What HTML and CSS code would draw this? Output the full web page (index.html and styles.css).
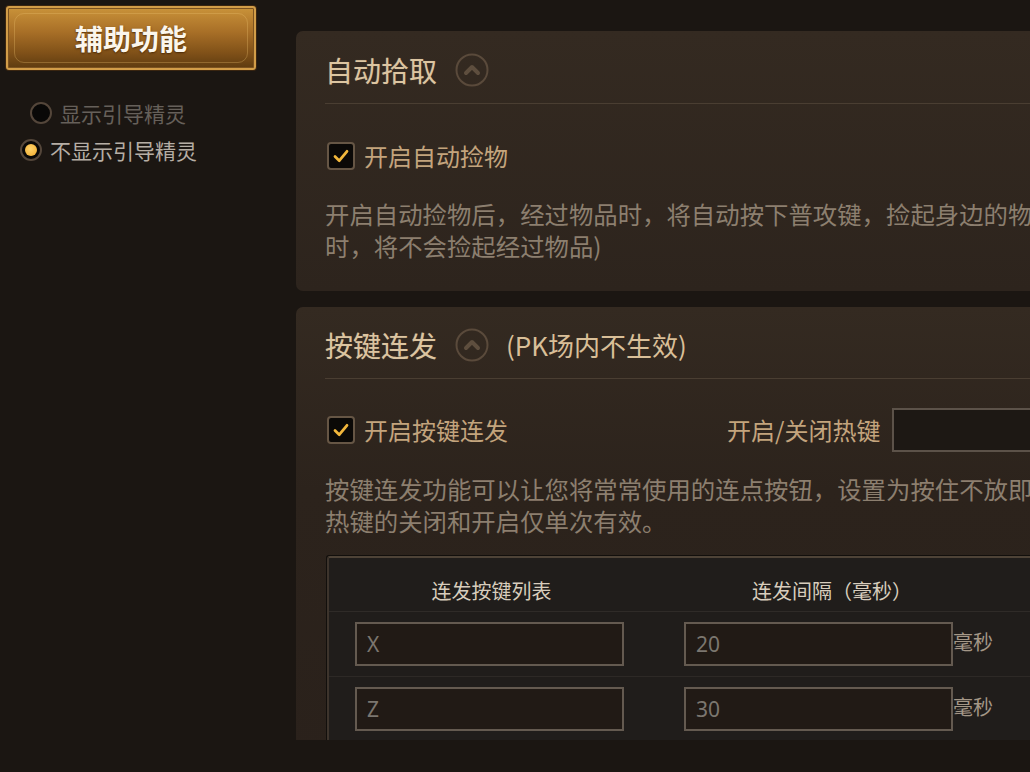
FILE: index.html
```html
<!DOCTYPE html>
<html lang="zh">
<head>
<meta charset="utf-8">
<title>辅助功能</title>
<link rel="stylesheet" href="styles.css">
</head>
<body>
<div class="app">
  <aside class="sidebar">
    <div class="tab-btn"><span class="tab-inner">辅助功能</span></div>
    <div class="radio-list">
      <div class="radio-row r1"><span class="radio"></span><span class="radio-text dim">显示引导精灵</span></div>
      <div class="radio-row r2"><span class="radio on"></span><span class="radio-text">不显示引导精灵</span></div>
    </div>
  </aside>
  <main class="main">
    <section class="panel p1">
      <header class="panel-head">
        <h2 class="panel-title">自动拾取</h2>
        <span class="collapse"><svg viewBox="0 0 34 34" width="34" height="34"><circle cx="17" cy="17" r="15.5" fill="none" stroke="#5a4a3b" stroke-width="2"/><path d="M11 20 L17 14 L23 20" fill="none" stroke="#5e4e3e" stroke-width="4" stroke-linecap="round" stroke-linejoin="round"/></svg></span>
      </header>
      <div class="check-row first">
        <span class="checkbox"><svg viewBox="0 0 28 28" width="28" height="28"><path d="M7 14.5 L12 19.5 L21 8.5" fill="none" stroke="#f2b73c" stroke-width="3.2" stroke-linecap="round" stroke-linejoin="round"/></svg></span>
        <span class="check-label">开启自动捡物</span>
      </div>
      <p class="desc d1"><span class="line">开启自动捡物后，经过物品时，将自动按下普攻键，捡起身边的物品（PK场内及骑乘状态</span><span class="line">时，将不会捡起经过物品)</span></p>
    </section>
    <section class="panel p2">
      <header class="panel-head h2">
        <h2 class="panel-title">按键连发</h2>
        <span class="collapse"><svg viewBox="0 0 34 34" width="34" height="34"><circle cx="17" cy="17" r="15.5" fill="none" stroke="#5a4a3b" stroke-width="2"/><path d="M11 20 L17 14 L23 20" fill="none" stroke="#5e4e3e" stroke-width="4" stroke-linecap="round" stroke-linejoin="round"/></svg></span>
        <span class="panel-note">(PK场内不生效)</span>
      </header>
      <div class="hot-row">
        <div class="check-row inline">
          <span class="checkbox"><svg viewBox="0 0 28 28" width="28" height="28"><path d="M7 14.5 L12 19.5 L21 8.5" fill="none" stroke="#f2b73c" stroke-width="3.2" stroke-linecap="round" stroke-linejoin="round"/></svg></span>
          <span class="check-label">开启按键连发</span>
        </div>
        <span class="hot-label">开启/关闭热键</span>
        <span class="hot-input"></span>
      </div>
      <p class="desc d2"><span class="line">按键连发功能可以让您将常常使用的连点按钮，设置为按住不放即可连续触发的按键，</span><span class="line">热键的关闭和开启仅单次有效。</span></p>
      <div class="table">
        <div class="t-head">
          <div class="th c1">连发按键列表</div>
          <div class="th c2">连发间隔（毫秒）</div>
        </div>
        <div class="t-row">
          <div class="td c1"><span class="field">X</span></div>
          <div class="td c2"><span class="field">20</span><span class="unit">毫秒</span></div>
        </div>
        <div class="t-row">
          <div class="td c1"><span class="field">Z</span></div>
          <div class="td c2"><span class="field">30</span><span class="unit">毫秒</span></div>
        </div>
      </div>
    </section>
  </main>
</div>
</body>
</html>
```

FILE: styles.css
```css
* { box-sizing: border-box; }
html, body { margin: 0; padding: 0; }
body {
  background: #1b1612;
  font-family: "Noto Sans CJK SC", "Noto Sans", sans-serif;
  width: 1030px;
  height: 772px;
  overflow: hidden;
}
.app {
  display: flex;
  height: 772px;
}
.sidebar {
  width: 296px;
  flex: none;
  padding: 6px 0 0 6px;
}
.tab-btn {
  width: 250px;
  height: 64px;
  border: 2px solid #d29d48;
  border-radius: 3px;
  background: linear-gradient(180deg, #c99239 0%, #a86f27 40%, #805118 75%, #5e3b10 100%);
  box-shadow: 0 0 0 1px #3a2510, inset 0 0 0 1px #7c5320;
  padding: 5px 6px;
}
.tab-inner {
  display: flex;
  align-items: center;
  justify-content: center;
  height: 100%;
  border: 1px solid rgba(240, 196, 112, 0.3);
  border-radius: 10px;
  color: #fbf6ec;
  font-size: 28px;
  font-weight: 700;
  line-height: 1;
  text-shadow: 0 1px 2px rgba(60, 30, 0, 0.8);
}
.radio-list {
  padding-top: 31px;
  display: flex;
  flex-direction: column;
  gap: 13px;
}
.radio-row {
  display: flex;
  align-items: center;
  height: 24px;
  gap: 8px;
}
.radio-row.r1 { padding-left: 24px; }
.radio-row.r2 { padding-left: 14px; }
.radio {
  width: 22px;
  height: 22px;
  border-radius: 50%;
  border: 2px solid #54463a;
  background: #090807;
  flex: none;
  display: flex;
  align-items: center;
  justify-content: center;
}
.radio.on::after {
  content: "";
  width: 12px;
  height: 12px;
  border-radius: 50%;
  background: radial-gradient(circle at 45% 40%, #ffd36a, #f0a92c);
}
.radio-text {
  font-size: 21px;
  line-height: 24px;
  color: #b6aea5;
}
.radio-text.dim { color: #66605a; }

.main {
  flex: none;
  width: 760px;
  height: 740px;
  overflow: hidden;
  padding-top: 31px;
  display: flex;
  flex-direction: column;
  gap: 16px;
}
.panel {
  width: 760px;
  border-radius: 7px 0 0 7px;
  background: linear-gradient(180deg, #342a21 0%, #2d241d 100%);
  padding: 0 0 0 29px;
  flex: none;
  overflow: hidden;
}
.p1 { height: 260px; }
.p2 { height: 460px; background: linear-gradient(180deg, #342a21 0%, #2c231c 40%, #2a211b 100%); }
.panel-head {
  display: flex;
  align-items: center;
  height: 73px;
  padding-top: 6px;
  border-bottom: 1px solid #4a3e32;
}
.panel-head.h2 { height: 72px; padding-top: 4px; }
.panel-title {
  margin: 0;
  font-size: 28px;
  font-weight: 400;
  line-height: 36px;
  color: #dcc5a1;
  text-shadow: 0 0 1px rgba(255, 220, 170, 0.3);
}
.collapse {
  display: flex;
  margin-left: 18px;
}
.panel-note {
  margin-left: 17px;
  font-size: 26px;
  line-height: 36px;
  color: #d9bf98;
}
.check-row {
  display: flex;
  align-items: center;
  gap: 9px;
  margin-left: 2px;
}
.check-row.first { margin-top: 38px; height: 28px; }
.check-row.inline { width: 400px; flex: none; }
.checkbox {
  width: 28px;
  height: 28px;
  flex: none;
  border: 2px solid #665645;
  border-radius: 4px;
  background: #0b0907;
  display: flex;
  align-items: center;
  justify-content: center;
}
.checkbox svg { width: 24px; height: 24px; }
.check-label {
  font-size: 24px;
  line-height: 28px;
  color: #c3a47d;
  white-space: nowrap;
}
.desc {
  margin: 0;
  font-size: 24.4px;
  line-height: 32px;
  color: #8c7f6f;
  width: 1000px;
}
.desc .line {
  display: block;
  white-space: nowrap;
}
.d1 { margin-top: 28px; }
.hot-row {
  display: flex;
  align-items: center;
  height: 44px;
  margin-top: 29px;
}
.hot-label {
  flex: none;
  font-size: 24px;
  line-height: 28px;
  color: #c3a47d;
  white-space: nowrap;
}
.hot-input {
  flex: none;
  margin-left: 12px;
  width: 200px;
  height: 44px;
  border: 2px solid #5c5249;
  background: #1d1814;
}
.d2 { margin-top: 21px; }
.table {
  margin: 19px 0 0 2px;
  width: 740px;
  background: #201d1b;
  border-top: 2px solid #4e4337;
  border-left: 2px solid #3d342c;
  border-radius: 3px 0 0 0;
  box-shadow: -1px -1px 0 #120f0c;
}
.t-head {
  display: grid;
  grid-template-columns: 325px 356px;
  height: 54px;
  border-bottom: 1px solid #2f2b28;
}
.th {
  display: flex;
  align-items: center;
  justify-content: center;
  padding-top: 12px;
  font-size: 20px;
  line-height: 24px;
  color: #d8cdbd;
}
.t-row {
  display: grid;
  grid-template-columns: 325px 356px;
  height: 65px;
  border-bottom: 1px solid #2d2926;
}
.td {
  display: flex;
  align-items: flex-start;
  padding-top: 10px;
}
.td.c1 { padding-left: 26px; }
.td.c2 { padding-left: 30px; }
.field {
  width: 269px;
  height: 44px;
  border: 2px solid #645a50;
  background: #211a15;
  padding: 0 10px;
  font-family: "Noto Sans", "Noto Sans CJK SC", sans-serif;
  font-size: 21px;
  line-height: 44px;
  color: #7b766f;
  display: flex;
  align-items: center;
}
.unit {
  font-size: 20px;
  line-height: 24px;
  margin-top: 8px;
  color: #a49787;
}
```
